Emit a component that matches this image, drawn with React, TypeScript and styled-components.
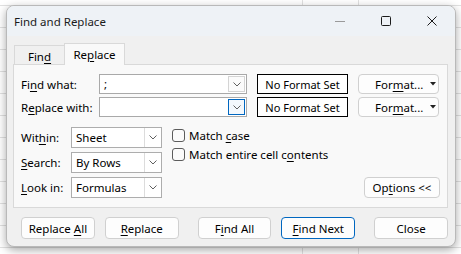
import React from "react";
import styled, { createGlobalStyle } from "styled-components";

const GlobalStyle = createGlobalStyle`
  body {
    margin: 0;
    font-family: "Segoe UI", "Noto Sans", sans-serif;
    font-size: 11px;
    color: #000;
  }
  * { box-sizing: border-box; }
`;

const Desk = styled.div`
  width: 461px;
  height: 254px;
  padding: 5px 0 0 6px;
  background-color: #fff;
  background-image:
    linear-gradient(to right, transparent 302px, #e1e1e1 302px, #e1e1e1 303px, transparent 303px),
    linear-gradient(to right, transparent 358px, #e1e1e1 358px, #e1e1e1 359px, transparent 359px),
    repeating-linear-gradient(to bottom, transparent 0, transparent 5px, #e1e1e1 5px, #e1e1e1 6px, transparent 6px, transparent 22px);
  overflow: hidden;
`;

const Window = styled.div`
  width: 450px;
  height: 242px;
  border: 1px solid #b9b9b9;
  border-radius: 8px;
  background: #f0f0f0;
  box-shadow: 0 3px 10px rgba(0, 0, 0, 0.35);
  overflow: hidden;
  display: flex;
  flex-direction: column;
`;

const TitleBar = styled.div`
  height: 30px;
  display: flex;
  align-items: center;
  background: #eef2f6;
  padding-left: 7px;
`;

const Title = styled.div`
  flex: 1;
  font-size: 11.5px;
  color: #1b1b1b;
`;

const CtrlButton = styled.div`
  width: 46px;
  height: 30px;
  display: flex;
  align-items: center;
  justify-content: center;
`;

const Body = styled.div`
  padding: 7px 7px 0 6px;
`;

const TabRow = styled.div`
  display: flex;
  align-items: flex-end;
  padding-left: 1px;
  height: 21px;
`;

const Tab = styled.div<{ $active?: boolean }>`
  height: ${(p) => (p.$active ? "22px" : "19px")};
  width: ${(p) => (p.$active ? "61px" : "50px")};
  display: flex;
  align-items: center;
  justify-content: center;
  font-size: 11.5px;
  background: ${(p) => (p.$active ? "#f9f9f9" : "#f0f0f0")};
  border: 1px solid #d9d9d9;
  border-bottom: none;
  border-right: ${(p) => (p.$active ? "1px solid #d9d9d9" : "none")};
  position: relative;
  z-index: 1;
  margin-bottom: ${(p) => (p.$active ? "-1px" : "0")};
  padding-top: ${(p) => (p.$active ? "0" : "2px")};
`;

const Panel = styled.div`
  width: 435px;
  height: 144px;
  border: 1px solid #d9d9d9;
  background: #f9f9f9;
  padding: 9px 7px 9px 7px;
  display: flex;
  flex-direction: column;
`;

const TopGrid = styled.div`
  display: grid;
  grid-template-columns: 68px 148px 91px 81px;
  grid-auto-rows: 20px;
  column-gap: 10px;
  row-gap: 3px;
  align-items: center;
`;

const OptionGrid = styled.div`
  margin-top: 10px;
  display: grid;
  grid-template-columns: 50px 91px 1fr auto;
  grid-template-rows: 20px 20px 20px;
  row-gap: 5px;
  align-items: center;
`;

const Label = styled.div<{ $row?: number }>`
  font-size: 11.5px;
  white-space: nowrap;
  grid-row: ${(p) => p.$row ?? "auto"};
`;

const Key = styled.span`
  text-decoration: underline;
  text-underline-offset: 2px;
`;

const Combo = styled.div`
  height: 20px;
  border: 1px solid #a9a9a9;
  background: #fff;
  display: flex;
  align-items: stretch;
  padding: 1px;
`;

const ComboText = styled.div`
  flex: 1;
  padding-left: 3px;
  font-size: 11.5px;
  line-height: 16px;
`;

const DropButton = styled.div<{ $focused?: boolean }>`
  width: 17px;
  border: 1px solid ${(p) => (p.$focused ? "#0067c0" : "#d4d4d4")};
  background: ${(p) => (p.$focused ? "#f3f8fd" : "#fbfbfb")};
  display: flex;
  align-items: center;
  justify-content: center;
`;

const FormatSet = styled.div`
  height: 20px;
  border: 1px solid #000;
  background: #fff;
  display: flex;
  align-items: center;
  justify-content: center;
  font-size: 11px;
`;

const Button = styled.div<{ $default?: boolean; $gap?: number }>`
  height: 22px;
  width: 74px;
  margin-left: ${(p) => p.$gap ?? 0}px;
  border: 1px solid ${(p) => (p.$default ? "#0067c0" : "#d0d0d0")};
  border-radius: 4px;
  background: #fdfdfd;
  display: flex;
  align-items: center;
  justify-content: center;
  font-size: 11.5px;
  white-space: nowrap;
`;

const FormatButton = styled(Button)`
  width: 81px;
  height: 20px;
  justify-content: flex-start;
  padding-left: 16px;
  gap: 7px;
`;

const OptionsButton = styled(Button)`
  width: 76px;
  height: 21px;
  grid-column: 4;
  grid-row: 3;
`;

const Select = styled.div<{ $row: number }>`
  grid-row: ${(p) => p.$row};
  grid-column: 2;
  height: 21px;
  border: 1px solid #adadad;
  background: #fff;
  display: flex;
  align-items: stretch;
`;

const SelectText = styled.div`
  flex: 1;
  padding-left: 4px;
  font-size: 11.5px;
  line-height: 19px;
`;

const SelectArrow = styled.div`
  width: 17px;
  border-left: 1px solid #dcdcdc;
  display: flex;
  align-items: center;
  justify-content: center;
`;

const CheckColumn = styled.div`
  grid-column: 3;
  grid-row: 1 / span 2;
  align-self: start;
  padding: 2px 0 0 10px;
  display: flex;
  flex-direction: column;
  gap: 6px;
`;

const CheckRow = styled.div`
  display: flex;
  align-items: center;
  gap: 4px;
  font-size: 11.5px;
  height: 13px;
`;

const Box = styled.div`
  width: 13px;
  height: 13px;
  border: 1px solid #5c5c5c;
  border-radius: 3px;
  background: #fbfbfb;
`;

const Footer = styled.div`
  display: flex;
  padding: 9px 0 0 8px;
`;

const Chevron = ({ color = "#606060" }: { color?: string }) => (
  <svg width="8" height="5" viewBox="0 0 8 5">
    <polyline points="0.5,0.5 4,4 7.5,0.5" fill="none" stroke={color} strokeWidth="1" />
  </svg>
);

const Caret = () => (
  <svg width="6" height="4" viewBox="0 0 6 4">
    <polygon points="0,0 6,0 3,3.5" fill="#222" />
  </svg>
);

const fields = [
  { label: <><span>Fi</span><Key>n</Key><span>d what:</span></>, value: ";", focused: false },
  { label: <><span>R</span><Key>e</Key><span>place with:</span></>, value: "", focused: true },
];

const selects = [
  { label: <><span>Wit</span><Key>h</Key><span>in:</span></>, value: "Sheet" },
  { label: <><Key>S</Key><span>earch:</span></>, value: "By Rows" },
  { label: <><Key>L</Key><span>ook in:</span></>, value: "Formulas" },
];

export default function App() {
  return (
    <Desk>
      <GlobalStyle />
      <Window>
        <TitleBar>
          <Title>Find and Replace</Title>
          <CtrlButton>
            <svg width="10" height="10" viewBox="0 0 10 10">
              <line x1="0" y1="5.5" x2="10" y2="5.5" stroke="#9a9a9a" strokeWidth="1" />
            </svg>
          </CtrlButton>
          <CtrlButton>
            <svg width="10" height="10" viewBox="0 0 10 10">
              <rect x="0.5" y="0.5" width="9" height="9" rx="1" fill="none" stroke="#1b1b1b" strokeWidth="1" />
            </svg>
          </CtrlButton>
          <CtrlButton>
            <svg width="10" height="10" viewBox="0 0 10 10">
              <path d="M0.5 0.5 L9.5 9.5 M9.5 0.5 L0.5 9.5" stroke="#1b1b1b" strokeWidth="1" />
            </svg>
          </CtrlButton>
        </TitleBar>
        <Body>
          <TabRow>
            <Tab>
              <span>Fin</span>
              <Key>d</Key>
            </Tab>
            <Tab $active>
              <span>Re</span>
              <Key>p</Key>
              <span>lace</span>
            </Tab>
          </TabRow>
          <Panel>
            <TopGrid>
              {fields.map((f, i) => (
                <React.Fragment key={i}>
                  <Label>{f.label}</Label>
                  <Combo>
                    <ComboText>{f.value}</ComboText>
                    <DropButton $focused={f.focused}>
                      <Chevron />
                    </DropButton>
                  </Combo>
                  <FormatSet>No Format Set</FormatSet>
                  <FormatButton>
                    <span>
                      For<Key>m</Key>at...
                    </span>
                    <Caret />
                  </FormatButton>
                </React.Fragment>
              ))}
            </TopGrid>
            <OptionGrid>
              {selects.map((s, i) => (
                <React.Fragment key={i}>
                  <Label $row={i + 1}>{s.label}</Label>
                  <Select $row={i + 1}>
                    <SelectText>{s.value}</SelectText>
                    <SelectArrow>
                      <Chevron />
                    </SelectArrow>
                  </Select>
                </React.Fragment>
              ))}
              <CheckColumn>
                <CheckRow>
                  <Box />
                  <span>
                    Match <Key>c</Key>ase
                  </span>
                </CheckRow>
                <CheckRow>
                  <Box />
                  <span>
                    Match entire cell c<Key>o</Key>ntents
                  </span>
                </CheckRow>
              </CheckColumn>
              <OptionsButton>
                <span>
                  Op<Key>t</Key>ions &lt;&lt;
                </span>
              </OptionsButton>
            </OptionGrid>
          </Panel>
          <Footer>
            <Button>
              <span>
                Replace <Key>A</Key>ll
              </span>
            </Button>
            <Button $gap={10}>
              <span>
                <Key>R</Key>eplace
              </span>
            </Button>
            <Button $gap={19}>
              <span>
                F<Key>i</Key>nd All
              </span>
            </Button>
            <Button $gap={10} $default>
              <span>
                <Key>F</Key>ind Next
              </span>
            </Button>
            <Button $gap={19}>
              <span>Close</span>
            </Button>
          </Footer>
        </Body>
      </Window>
    </Desk>
  );
}
